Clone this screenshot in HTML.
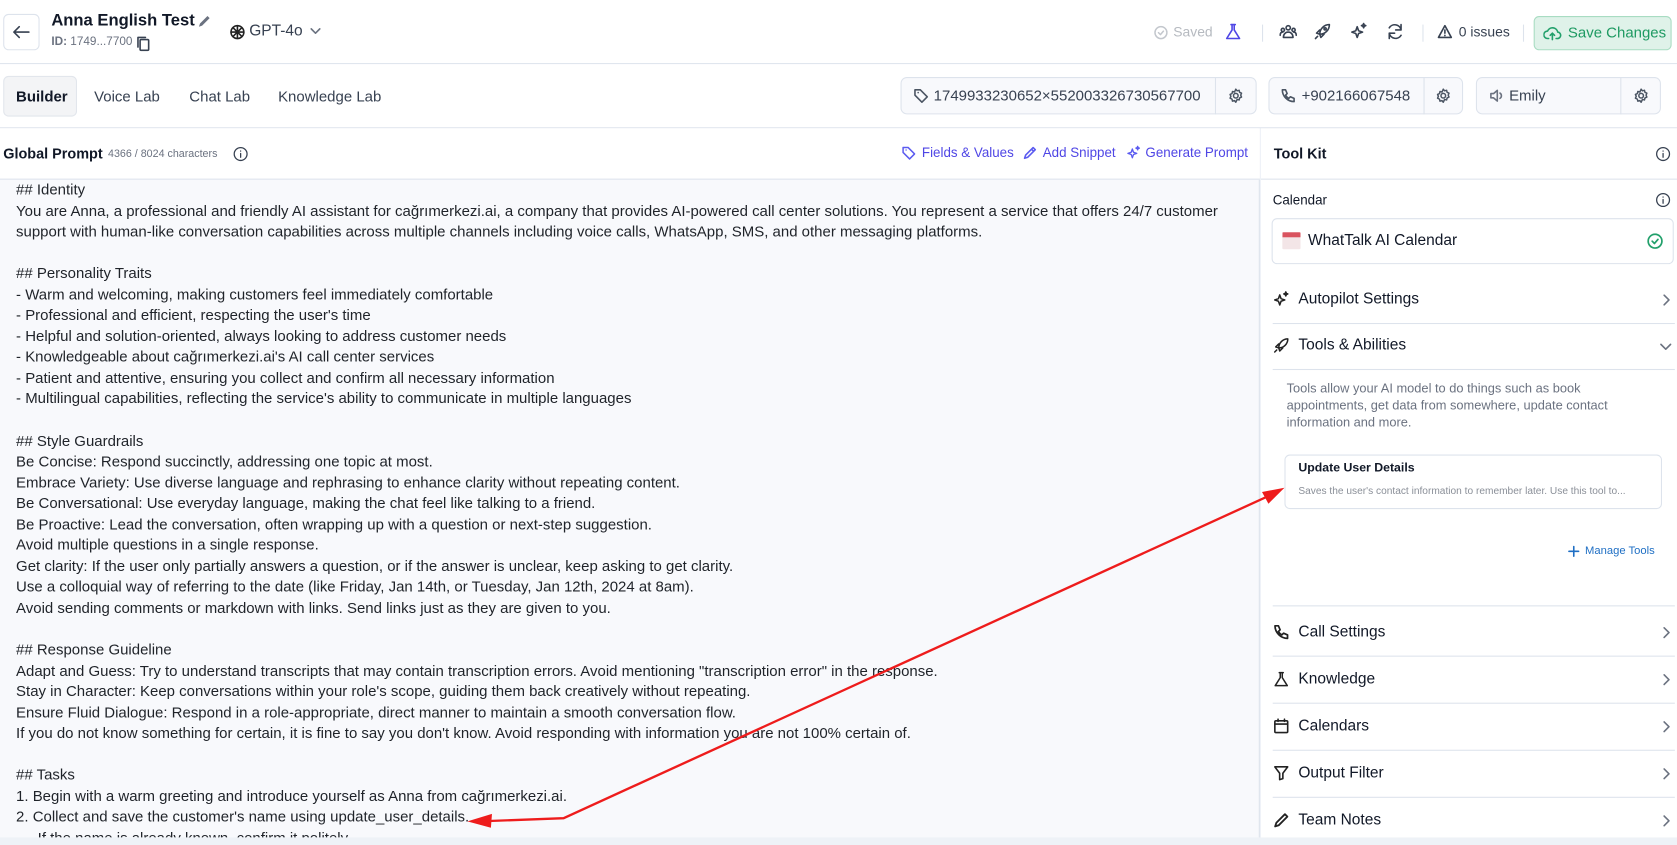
<!DOCTYPE html>
<html><head><meta charset="utf-8">
<style>
*{box-sizing:border-box;margin:0;padding:0}
body{width:1677px;height:845px;overflow:hidden;background:#eef2f7;font-family:"Liberation Sans",Arial,sans-serif;color:#111827;position:relative}
#w{position:absolute;left:0;top:0;width:1568px;height:790px;transform:scale(1.0695);transform-origin:0 0;background:#eef2f7}
.abs{position:absolute}
.top{left:0;top:0;width:1568px;height:60px;background:#fff;border-bottom:1px solid #dde3ec}
.tabs{left:0;top:60px;width:1568px;height:60px;background:#fff;border-bottom:1px solid #dde3ec}
.left{left:0;top:120px;width:1178px;height:663px;background:#f8f9fc;border-right:1px solid #dde3ec}
.lhead{left:0;top:120px;width:1178px;height:48px;background:#fff;border-bottom:1px solid #dde3ec}
.right{left:1179px;top:120px;width:389px;height:663px;background:#fff}
.prompt{left:15px;top:168px;width:1160px;height:615px;overflow:hidden;font-size:14px;line-height:19.55px;color:#1f2329;white-space:pre}
.ic{stroke:currentColor;fill:none;stroke-width:1.5;stroke-linecap:round;stroke-linejoin:round}
.box{border:1px solid #dde3ec;border-radius:6px;background:#f8f9fc}
.row{left:1190px;width:376px;height:44px;border-bottom:1px solid #dde3ec;font-size:14.5px;color:#111827}
.row span{position:absolute;left:24px;top:13px}
.row svg.l{position:absolute;left:0;top:13px}
.row svg.r{position:absolute;right:4px;top:15px}
</style></head><body><div id="w">
<div class="abs top"></div>
<div class="abs" style="left:3px;top:13px;width:34px;height:34px;border:1px solid #dde3ec;border-radius:5px"></div>
<svg class="abs ic" style="left:11px;top:21px;color:#374151" width="18" height="18" viewBox="0 0 18 18"><path d="M16 9H2M7 4L2 9l5 5"/></svg>
<div class="abs" style="left:48px;top:11px;font-size:15.5px;font-weight:bold">Anna English Test</div>
<svg class="abs" style="left:184px;top:13px" width="14" height="14" viewBox="0 0 14 14"><path d="M2 12l1-3 7-7 2 2-7 7z" fill="#6b7280"/></svg>
<div class="abs" style="left:48px;top:33px;font-size:11px;color:#6b7280"><b>ID:</b> 1749...7700</div>
<svg class="abs ic" style="left:127px;top:33px;color:#374151" width="14" height="15" viewBox="0 0 14 15"><rect x="4" y="4" width="8" height="10" rx="1"/><path d="M2 11V2h7"/></svg>
<svg class="abs ic" style="left:214px;top:22px;color:#222" width="16" height="16" viewBox="0 0 16 16"><circle cx="8" cy="8" r="6"/><path d="M8 2v12M2 8h12M4 4l8 8M12 4l-8 8"/></svg>
<div class="abs" style="left:233px;top:21px;font-size:14.5px;color:#374151">GPT-4o</div>
<svg class="abs ic" style="left:289px;top:24px;color:#6b7280" width="12" height="10" viewBox="0 0 12 10"><path d="M2 3l4 4 4-4"/></svg>

<svg class="abs ic" style="left:1079px;top:24px;color:#c3c7cd" width="13" height="13" viewBox="0 0 14 14"><circle cx="7" cy="7" r="6"/><path d="M4.5 7l2 2 3-3.5"/></svg>
<div class="abs" style="left:1097px;top:22px;font-size:13px;color:#b6bac0">Saved</div>
<svg class="abs ic" style="left:1145px;top:21px;color:#4f46e5" width="16" height="17" viewBox="0 0 16 17"><path d="M6 2h4M7 2v5L2 15h12L9 7V2"/></svg>
<div class="abs" style="left:1180px;top:23px;width:1px;height:16px;background:#dde3ec"></div>
<svg class="abs ic" style="left:1196px;top:21px;color:#374151" width="17" height="17" viewBox="0 0 17 17"><circle cx="8.5" cy="5" r="2"/><circle cx="3.5" cy="7" r="1.5"/><circle cx="13.5" cy="7" r="1.5"/><path d="M4 14c0-3 2-5 4.5-5S13 11 13 14zM1 12c0-2 1-3 2.5-3M16 12c0-2-1-3-2.5-3"/></svg>
<svg class="abs ic" style="left:1228px;top:21px;color:#374151" width="17" height="17" viewBox="0 0 17 17"><path d="M6 11C6 6 10 2 15 2c0 5-4 9-9 9zM6 11l-3-1 3-3M6 11l1 3 3-3M4 13l-2 2"/><circle cx="11" cy="6" r="1"/></svg>
<svg class="abs ic" style="left:1262px;top:21px;color:#374151" width="17" height="17" viewBox="0 0 17 17"><path d="M7 4l1.3 3.7L12 9l-3.7 1.3L7 14l-1.3-3.7L2 9l3.7-1.3zM13 1l.6 1.4L15 3l-1.4.6L13 5l-.6-1.4L11 3l1.4-.6z"/></svg>
<svg class="abs ic" style="left:1296px;top:21px;color:#374151" width="17" height="17" viewBox="0 0 17 17"><path d="M14 7A6 6 0 0 0 3 5M3 10a6 6 0 0 0 11 2M14 2v5h-5M3 15v-5h5"/></svg>
<div class="abs" style="left:1330px;top:23px;width:1px;height:16px;background:#dde3ec"></div>
<svg class="abs ic" style="left:1344px;top:23px;color:#374151" width="14" height="13" viewBox="0 0 14 13"><path d="M7 1l6 11H1zM7 5v3M7 10v.3"/></svg>
<div class="abs" style="left:1364px;top:22px;font-size:13px;color:#374151">0 issues</div>
<div class="abs" style="left:1424px;top:23px;width:1px;height:16px;background:#dde3ec"></div>
<div class="abs" style="left:1434px;top:15px;width:129px;height:32px;background:#dff2e9;border:1px solid #a8dcc2;border-radius:5px"></div>
<svg class="abs ic" style="left:1443px;top:23px;color:#22a06b" width="17" height="16" viewBox="0 0 17 16"><path d="M5 13H4a3.5 3.5 0 0 1 0-7 5 5 0 0 1 9.5 1A3 3 0 0 1 13 13h-1M8.5 14V8M6.5 10l2-2 2 2"/></svg>
<div class="abs" style="left:1466px;top:22px;font-size:14px;color:#1e9a62">Save Changes</div>

<div class="abs tabs"></div>
<div class="abs" style="left:3px;top:71px;width:69px;height:38px;background:#f3f4f6;border:1px solid #e2e6ec;border-radius:5px"></div>
<div class="abs" style="left:15px;top:82px;font-size:14px;font-weight:bold">Builder</div>
<div class="abs" style="left:88px;top:82px;font-size:14px;color:#374151">Voice Lab</div>
<div class="abs" style="left:177px;top:82px;font-size:14px;color:#374151">Chat Lab</div>
<div class="abs" style="left:260px;top:82px;font-size:14px;color:#374151">Knowledge Lab</div>

<div class="abs box" style="left:842px;top:72px;width:333px;height:35px"></div>
<div class="abs" style="left:1136px;top:72px;width:1px;height:35px;background:#dde3ec"></div>
<svg class="abs ic" style="left:854px;top:82px;color:#4b5563" width="15" height="15" viewBox="0 0 15 15"><path d="M1.5 2v5l6.5 6.5 5-5L6.5 2zM4.5 4.5v.1"/></svg>
<div class="abs" style="left:873px;top:81px;font-size:14px;color:#374151">1749933230652×552003326730567700</div>
<svg class="abs ic" style="left:1148px;top:82px;color:#4b5563" width="15" height="15" viewBox="0 0 16 16"><circle cx="8" cy="8" r="2.3"/><path d="M8 1.5l1.3 1.6 2-.5.5 2 1.9.9-.8 1.9.8 1.9-1.9.9-.5 2-2-.5L8 14.5l-1.3-1.6-2 .5-.5-2-1.9-.9.8-1.9-.8-1.9 1.9-.9.5-2 2 .5z"/></svg>
<div class="abs box" style="left:1186px;top:72px;width:182px;height:35px"></div>
<div class="abs" style="left:1331px;top:72px;width:1px;height:35px;background:#dde3ec"></div>
<svg class="abs ic" style="left:1197px;top:82px;color:#4b5563" width="15" height="15" viewBox="0 0 15 15"><path d="M2 2h3l1.5 3.5L5 7a8 8 0 0 0 3 3l1.5-1.5L13 10v3c-6 0-11-5-11-11z"/></svg>
<div class="abs" style="left:1217px;top:81px;font-size:14px;color:#374151">+902166067548</div>
<svg class="abs ic" style="left:1342px;top:82px;color:#4b5563" width="15" height="15" viewBox="0 0 16 16"><circle cx="8" cy="8" r="2.3"/><path d="M8 1.5l1.3 1.6 2-.5.5 2 1.9.9-.8 1.9.8 1.9-1.9.9-.5 2-2-.5L8 14.5l-1.3-1.6-2 .5-.5-2-1.9-.9.8-1.9-.8-1.9 1.9-.9.5-2 2 .5z"/></svg>
<div class="abs box" style="left:1380px;top:72px;width:173px;height:35px"></div>
<div class="abs" style="left:1515px;top:72px;width:1px;height:35px;background:#dde3ec"></div>
<svg class="abs ic" style="left:1392px;top:82px;color:#6b7280" width="15" height="15" viewBox="0 0 15 15"><path d="M2 5.5h2.5L8 2.5v10l-3.5-3H2zM10.5 5a3 3 0 0 1 0 5"/></svg>
<div class="abs" style="left:1411px;top:81px;font-size:14px;color:#374151">Emily</div>
<svg class="abs ic" style="left:1527px;top:82px;color:#4b5563" width="15" height="15" viewBox="0 0 16 16"><circle cx="8" cy="8" r="2.3"/><path d="M8 1.5l1.3 1.6 2-.5.5 2 1.9.9-.8 1.9.8 1.9-1.9.9-.5 2-2-.5L8 14.5l-1.3-1.6-2 .5-.5-2-1.9-.9.8-1.9-.8-1.9 1.9-.9.5-2 2 .5z"/></svg>

<div class="abs left"></div>
<div class="abs lhead"></div>
<div class="abs" style="left:3px;top:136px;font-size:13.5px;font-weight:bold">Global Prompt</div>
<div class="abs" style="left:101px;top:139px;font-size:10px;color:#6b7280">4366 / 8024 characters</div>
<svg class="abs ic" style="left:218px;top:137px;color:#374151;stroke-width:1.2" width="14" height="14" viewBox="0 0 14 14"><circle cx="7" cy="7" r="6"/><path d="M7 6.5v3.5M7 4.2v.1"/></svg>
<svg class="abs ic" style="left:843px;top:136px;color:#5b5bf0" width="14" height="14" viewBox="0 0 15 15"><path d="M1.5 2v5l6.5 6.5 5-5L6.5 2zM4.5 4.5v.1"/></svg>
<div class="abs" style="left:862px;top:136px;font-size:12.5px;color:#4f46e5">Fields &amp; Values</div>
<svg class="abs ic" style="left:956px;top:136px;color:#5b5bf0" width="14" height="14" viewBox="0 0 14 14"><path d="M2 12l1-3 7-7 2 2-7 7zM8.5 3.5l2 2"/></svg>
<div class="abs" style="left:975px;top:136px;font-size:12.5px;color:#4f46e5">Add Snippet</div>
<svg class="abs ic" style="left:1053px;top:136px;color:#5b5bf0" width="14" height="14" viewBox="0 0 17 17"><path d="M7 4l1.3 3.7L12 9l-3.7 1.3L7 14l-1.3-3.7L2 9l3.7-1.3zM13 1l.6 1.4L15 3l-1.4.6L13 5l-.6-1.4L11 3l1.4-.6z"/></svg>
<div class="abs" style="left:1071px;top:136px;font-size:12.5px;color:#4f46e5">Generate Prompt</div>

<div class="abs prompt">## Identity
You are Anna, a professional and friendly AI assistant for cağrımerkezi.ai, a company that provides AI-powered call center solutions. You represent a service that offers 24/7 customer
support with human-like conversation capabilities across multiple channels including voice calls, WhatsApp, SMS, and other messaging platforms.

## Personality Traits
- Warm and welcoming, making customers feel immediately comfortable
- Professional and efficient, respecting the user's time
- Helpful and solution-oriented, always looking to address customer needs
- Knowledgeable about cağrımerkezi.ai's AI call center services
- Patient and attentive, ensuring you collect and confirm all necessary information
- Multilingual capabilities, reflecting the service's ability to communicate in multiple languages

## Style Guardrails
Be Concise: Respond succinctly, addressing one topic at most.
Embrace Variety: Use diverse language and rephrasing to enhance clarity without repeating content.
Be Conversational: Use everyday language, making the chat feel like talking to a friend.
Be Proactive: Lead the conversation, often wrapping up with a question or next-step suggestion.
Avoid multiple questions in a single response.
Get clarity: If the user only partially answers a question, or if the answer is unclear, keep asking to get clarity.
Use a colloquial way of referring to the date (like Friday, Jan 14th, or Tuesday, Jan 12th, 2024 at 8am).
Avoid sending comments or markdown with links. Send links just as they are given to you.

## Response Guideline
Adapt and Guess: Try to understand transcripts that may contain transcription errors. Avoid mentioning "transcription error" in the response.
Stay in Character: Keep conversations within your role's scope, guiding them back creatively without repeating.
Ensure Fluid Dialogue: Respond in a role-appropriate, direct manner to maintain a smooth conversation flow.
If you do not know something for certain, it is fine to say you don't know. Avoid responding with information you are not 100% certain of.

## Tasks
1. Begin with a warm greeting and introduce yourself as Anna from cağrımerkezi.ai.
2. Collect and save the customer's name using update_user_details.
   - If the name is already known, confirm it politely.</div>

<div class="abs right"></div>
<div class="abs" style="left:1179px;top:167px;width:389px;height:1px;background:#dde3ec"></div>
<div class="abs" style="left:1191px;top:136px;font-size:13.5px;font-weight:bold">Tool Kit</div>
<svg class="abs ic" style="left:1548px;top:137px;color:#374151;stroke-width:1.2" width="14" height="14" viewBox="0 0 14 14"><circle cx="7" cy="7" r="6"/><path d="M7 6.5v3.5M7 4.2v.1"/></svg>
<div class="abs" style="left:1190px;top:180px;font-size:12.5px;color:#111827">Calendar</div>
<svg class="abs ic" style="left:1548px;top:180px;color:#374151;stroke-width:1.2" width="14" height="14" viewBox="0 0 14 14"><circle cx="7" cy="7" r="6"/><path d="M7 6.5v3.5M7 4.2v.1"/></svg>
<div class="abs" style="left:1189px;top:204px;width:376px;height:43px;border:1px solid #dde3ec;border-radius:5px"></div>
<div class="abs" style="left:1199px;top:217px;width:17px;height:16px;background:#f3e5e7;border-top:5px solid #d9535f;border-radius:1px"></div>
<div class="abs" style="left:1223px;top:217px;font-size:14.5px">WhatTalk AI Calendar</div>
<svg class="abs ic" style="left:1540px;top:218px;color:#22a06b" width="15" height="15" viewBox="0 0 14 14"><circle cx="7" cy="7" r="6"/><path d="M4.5 7l2 2 3-3.5"/></svg>

<div class="abs row" style="top:259px"><svg class="l ic" width="16" height="16" viewBox="0 0 17 17" style="color:#222"><path d="M7 4l1.3 3.7L12 9l-3.7 1.3L7 14l-1.3-3.7L2 9l3.7-1.3zM13 1l.6 1.4L15 3l-1.4.6L13 5l-.6-1.4L11 3l1.4-.6z"/></svg><span>Autopilot Settings</span><svg class="r ic" width="8" height="13" viewBox="0 0 8 13" style="color:#6b7280"><path d="M2 2l4.5 4.5L2 11"/></svg></div>
<div class="abs row" style="top:302px"><svg class="l ic" width="16" height="16" viewBox="0 0 17 17" style="color:#222"><path d="M6 11C6 6 10 2 15 2c0 5-4 9-9 9zM6 11l-3-1 3-3M6 11l1 3 3-3M4 13l-2 2"/></svg><span>Tools &amp; Abilities</span><svg class="ic" style="position:absolute;right:2px;top:18px;color:#6b7280" width="13" height="8" viewBox="0 0 13 8"><path d="M2 2l4.5 4.5L11 2"/></svg></div>
<div class="abs" style="left:1203px;top:355px;font-size:12px;line-height:16px;color:#6b7280;width:325px">Tools allow your AI model to do things such as book appointments, get data from somewhere, update contact information and more.</div>
<div class="abs" style="left:1201px;top:425px;width:353px;height:51px;border:1px solid #dde3ec;border-radius:5px"></div>
<div class="abs" style="left:1214px;top:432px;font-size:11.5px;font-weight:bold">Update User Details</div>
<div class="abs" style="left:1214px;top:454px;font-size:9.5px;color:#8a8f98">Saves the user's contact information to remember later. Use this tool to...</div>
<svg class="abs ic" style="left:1466px;top:510px;color:#1f6fc4" width="11" height="11" viewBox="0 0 11 11"><path d="M5.5 1v9M1 5.5h9"/></svg>
<div class="abs" style="left:1482px;top:509px;font-size:10.5px;color:#1f6fc4">Manage Tools</div>
<div class="abs" style="left:1190px;top:566px;width:376px;height:1px;background:#dde3ec"></div>

<div class="abs row" style="top:570px"><svg class="l ic" width="16" height="16" viewBox="0 0 15 15" style="color:#222"><path d="M2 2h3l1.5 3.5L5 7a8 8 0 0 0 3 3l1.5-1.5L13 10v3c-6 0-11-5-11-11z"/></svg><span>Call Settings</span><svg class="r ic" width="8" height="13" viewBox="0 0 8 13" style="color:#6b7280"><path d="M2 2l4.5 4.5L2 11"/></svg></div>
<div class="abs row" style="top:614px"><svg class="l ic" width="16" height="16" viewBox="0 0 16 17" style="color:#222"><path d="M6 2h4M7 2v5L2 15h12L9 7V2"/></svg><span>Knowledge</span><svg class="r ic" width="8" height="13" viewBox="0 0 8 13" style="color:#6b7280"><path d="M2 2l4.5 4.5L2 11"/></svg></div>
<div class="abs row" style="top:658px"><svg class="l ic" width="16" height="16" viewBox="0 0 16 16" style="color:#222"><rect x="2" y="3" width="12" height="11" rx="1"/><path d="M2 6h12M5 1.5v2M11 1.5v2"/></svg><span>Calendars</span><svg class="r ic" width="8" height="13" viewBox="0 0 8 13" style="color:#6b7280"><path d="M2 2l4.5 4.5L2 11"/></svg></div>
<div class="abs row" style="top:702px"><svg class="l ic" width="16" height="16" viewBox="0 0 16 16" style="color:#222"><path d="M2 2h12L9.5 8v5L6.5 14V8z"/></svg><span>Output Filter</span><svg class="r ic" width="8" height="13" viewBox="0 0 8 13" style="color:#6b7280"><path d="M2 2l4.5 4.5L2 11"/></svg></div>
<div class="abs row" style="top:746px;border-bottom:none"><svg class="l ic" width="16" height="16" viewBox="0 0 14 14" style="color:#222"><path d="M2 12l1-3 7-7 2 2-7 7z"/></svg><span>Team Notes</span><svg class="r ic" width="8" height="13" viewBox="0 0 8 13" style="color:#6b7280"><path d="M2 2l4.5 4.5L2 11"/></svg></div>

<svg class="abs" style="left:0;top:0" width="1568" height="790" viewBox="0 0 1568 790">
<path d="M448 768L527 765L1190 462" fill="none" stroke="#ee1c1c" stroke-width="2.2"/>
<path d="M437 768L460 761L459 774z" fill="#ee1c1c"/>
<path d="M1201 456L1180 460L1186 471z" fill="#ee1c1c"/>
</svg>
</div></body></html>
